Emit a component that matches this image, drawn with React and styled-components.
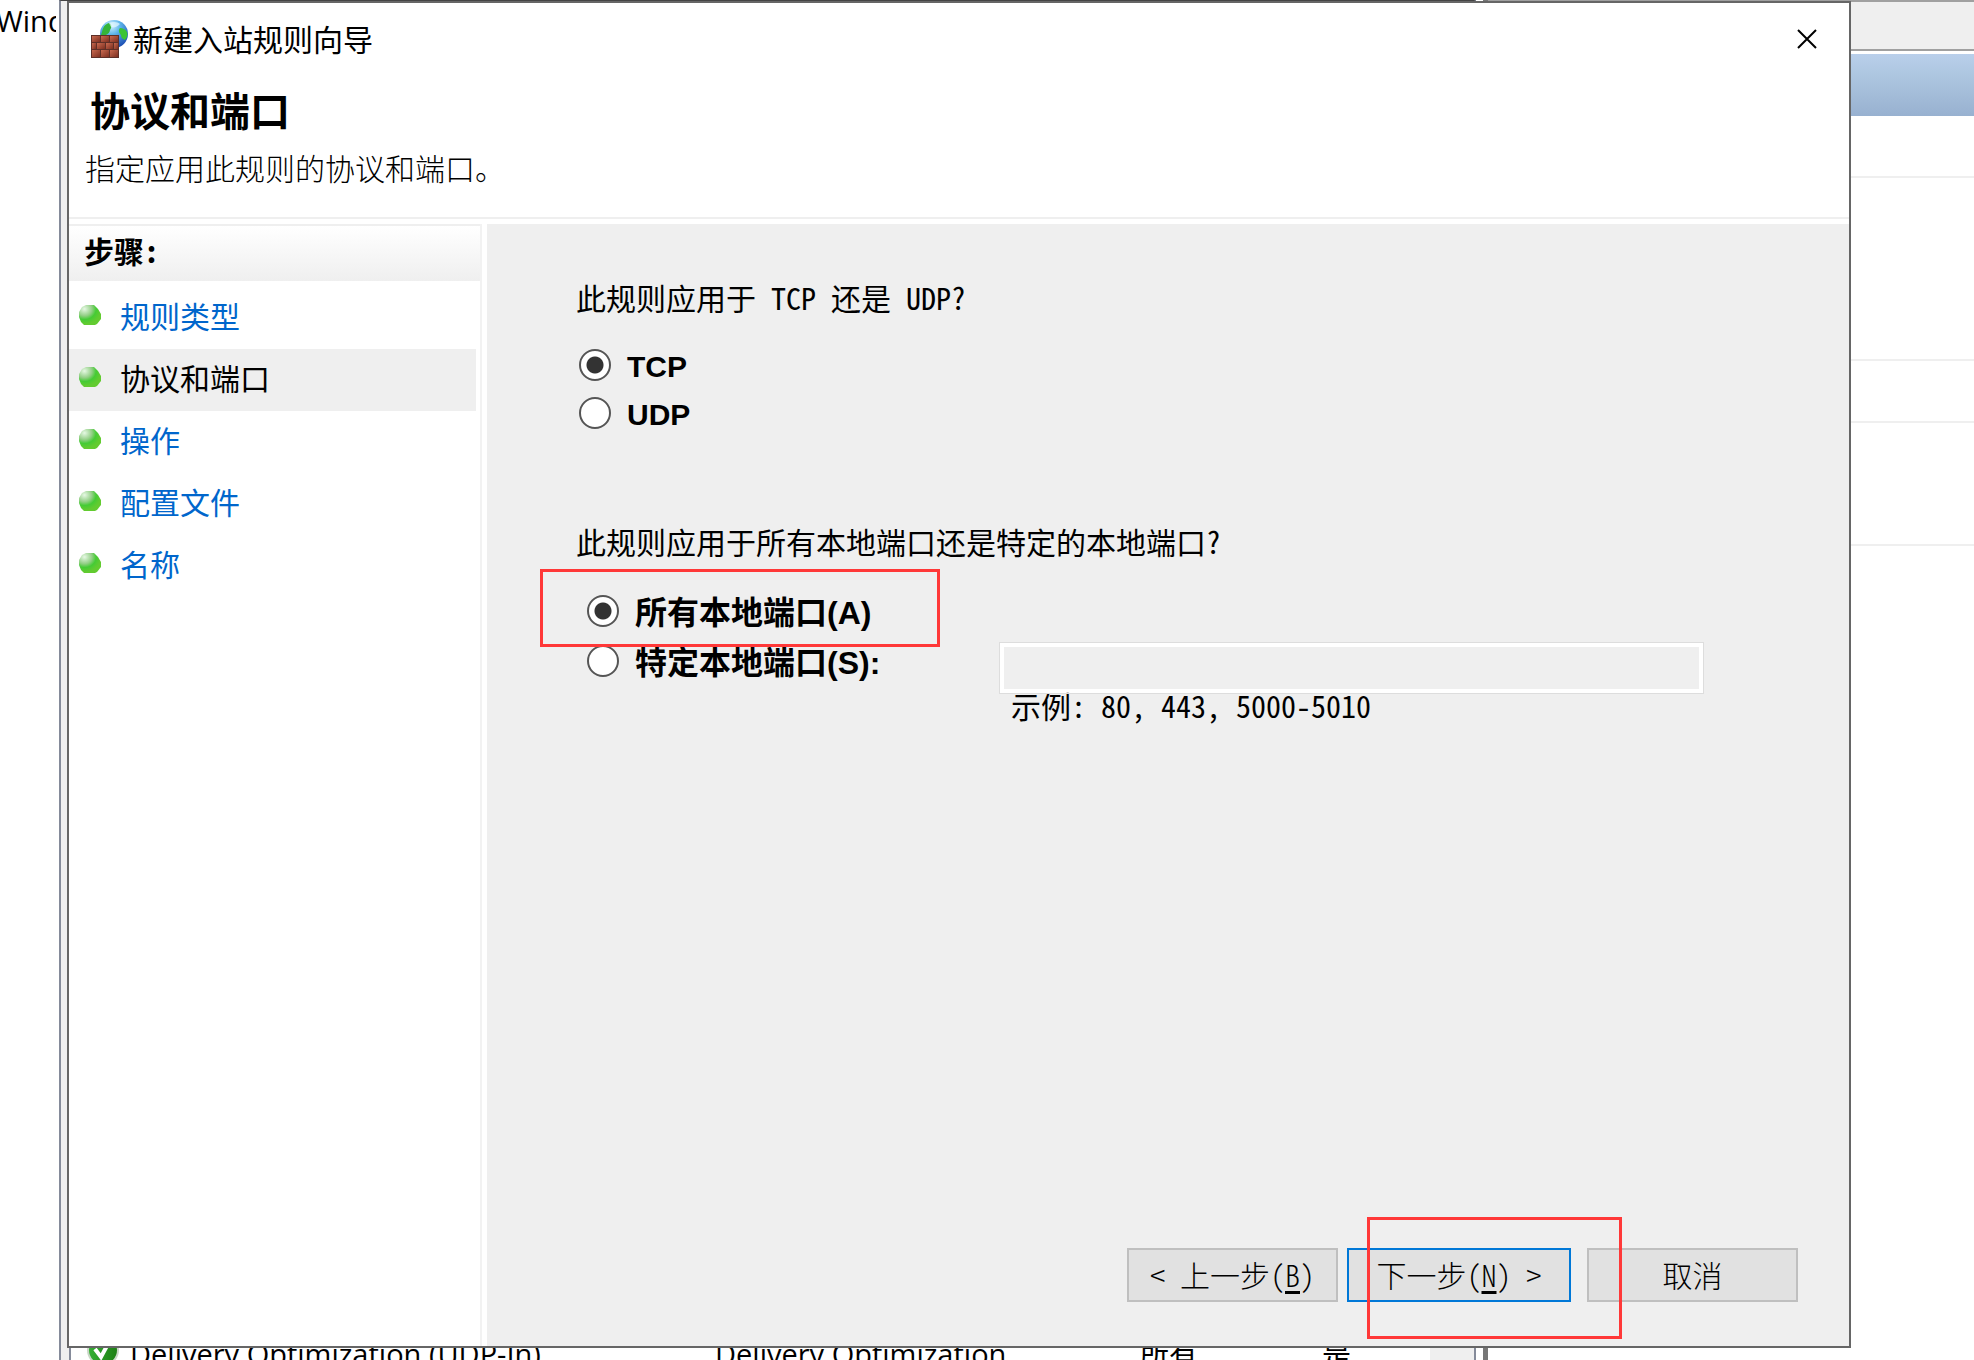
import { useState } from "react";
import styled, { createGlobalStyle } from "styled-components";

const steps = ["规则类型", "协议和端口", "操作", "配置文件", "名称"];

const App = () => {
    const [protocol, setProtocol] = useState("TCP");
    const [ports, setPorts] = useState("all");

    return (
        <>
            <GlobalStyle />
            <Desktop>
                <TreePane>Windows</TreePane>
                <ListPane>
                    <RuleRow>
                        <RuleName>
                            <CheckIcon />
                            Delivery Optimization (UDP-In)
                        </RuleName>
                        <RuleGroup>Delivery Optimization</RuleGroup>
                        <RuleProfile>所有</RuleProfile>
                        <RuleEnabled>是</RuleEnabled>
                        <ScrollTrack />
                    </RuleRow>
                </ListPane>
                <ActionPane>
                    <ActionTop />
                    <ActionHeader />
                    <ActionBlock $height={62} />
                    <ActionBlock $height={183} />
                    <ActionBlock $height={62} />
                    <ActionBlock $height={123} />
                </ActionPane>

                <Dialog role="dialog" aria-labelledby="wizard-title">
                    <TitleBar>
                        <FirewallIcon />
                        <Title id="wizard-title">新建入站规则向导</Title>
                        <CloseButton type="button" aria-label="关闭">
                            <svg width="20" height="20" viewBox="0 0 20 20" fill="none" stroke="#000" strokeWidth="2">
                                <path d="M1 1L19 19M19 1L1 19" />
                            </svg>
                        </CloseButton>
                    </TitleBar>
                    <Header>
                        <Heading>协议和端口</Heading>
                        <SubHeading>指定应用此规则的协议和端口。</SubHeading>
                    </Header>

                    <Body>
                        <Sidebar>
                            <SidebarTitle>步骤<Latin>:</Latin></SidebarTitle>
                            <StepList>
                                {steps.map((step, i) => (
                                    <Step key={step} $active={i === 1}>
                                        <Bullet />
                                        <StepLink href="#" $active={i === 1}>{step}</StepLink>
                                    </Step>
                                ))}
                            </StepList>
                        </Sidebar>

                        <Content>
                            <Question>
                                此规则应用于<Latin> TCP </Latin>还是<Latin> UDP?</Latin>
                            </Question>
                            <ProtocolGroup>
                                {["TCP", "UDP"].map((name) => (
                                    <Option key={name}>
                                        <Radio
                                            name="protocol"
                                            checked={protocol === name}
                                            onChange={() => setProtocol(name)}
                                        />
                                        <OptionText $size={30}>{name}</OptionText>
                                    </Option>
                                ))}
                            </ProtocolGroup>

                            <Question>
                                此规则应用于所有本地端口还是特定的本地端口<Latin>?</Latin>
                            </Question>
                            <PortGroup>
                                <Marked>
                                    <Option $tall>
                                        <Radio
                                            name="ports"
                                            checked={ports === "all"}
                                            onChange={() => setPorts("all")}
                                        />
                                        <OptionText $size={32}>所有本地端口(A)</OptionText>
                                    </Option>
                                    <PortMark />
                                </Marked>
                                <PortRow>
                                    <Option $tall>
                                        <Radio
                                            name="ports"
                                            checked={ports === "some"}
                                            onChange={() => setPorts("some")}
                                        />
                                        <OptionText $size={32}>特定本地端口(S):</OptionText>
                                    </Option>
                                    <PortField>
                                        <PortInput
                                            type="text"
                                            aria-label="特定本地端口"
                                            aria-describedby="port-hint"
                                            disabled={ports !== "some"}
                                        />
                                        <Hint id="port-hint">
                                            示例<Latin>: 80, 443, 5000-5010</Latin>
                                        </Hint>
                                    </PortField>
                                </PortRow>
                            </PortGroup>

                            <Footer>
                                <Button type="button">
                                    <Latin>&lt; </Latin>上一步<Latin>(<u>B</u>)</Latin>
                                </Button>
                                <NextWrap>
                                    <Button type="button" $primary>
                                        下一步<Latin>(<u>N</u>) &gt;</Latin>
                                    </Button>
                                    <NextMark />
                                </NextWrap>
                                <Button type="button">取消</Button>
                            </Footer>
                        </Content>
                    </Body>
                </Dialog>
            </Desktop>
        </>
    );
};
export default App;

const FirewallIcon = () => (
    <svg width="38" height="38" viewBox="0 0 38 38" aria-hidden="true">
        <defs>
            <radialGradient id="globe" cx="0.4" cy="0.2" r="0.8">
                <stop offset="0" stopColor="#d8f4ff" />
                <stop offset="0.4" stopColor="#5db4ea" />
                <stop offset="1" stopColor="#1c4fb4" />
            </radialGradient>
            <linearGradient id="brick" x1="0" y1="0" x2="1" y2="1">
                <stop offset="0" stopColor="#c96a50" />
                <stop offset="1" stopColor="#7d2f20" />
            </linearGradient>
        </defs>
        <circle cx="23" cy="14" r="14" fill="url(#globe)" />
        <path d="M11 12C12 7 14 4 18 3c3 1 3 4 1 7 0 2-2 4-4 5h-5z" fill="#35b53a" />
        <path d="M29 8c3 0 5 1 7 4 1 3 0 6-2 8-3-1-4-3-4-5-2-2-3-5-1-7z" fill="#3cc335" />
        <path d="M18 3c4-2 9-1 11 1-3 3-6 4-9 3z" fill="#e4f8ff" opacity="0.7" />
        <rect x="0" y="15" width="28" height="23" fill="#5e3028" />
        <g fill="url(#brick)">
            <rect x="1" y="16" width="8" height="6" />
            <rect x="10" y="16" width="8" height="6" />
            <rect x="19" y="16" width="8" height="6" />
            <rect x="1" y="23" width="4" height="6" />
            <rect x="6" y="23" width="8" height="6" />
            <rect x="15" y="23" width="7" height="6" />
            <rect x="23" y="23" width="4" height="6" />
            <rect x="1" y="30" width="8" height="7" />
            <rect x="10" y="30" width="8" height="7" />
            <rect x="19" y="30" width="8" height="7" />
        </g>
    </svg>
);

const CheckIcon = () => (
    <svg width="32" height="28" viewBox="0 4 32 28" aria-hidden="true">
        <defs>
            <linearGradient id="ok" x1="0" y1="0" x2="1" y2="0">
                <stop offset="0" stopColor="#35b035" />
                <stop offset="1" stopColor="#1c7d12" />
            </linearGradient>
        </defs>
        <circle cx="16" cy="16" r="15" fill="url(#ok)" stroke="#c9d6c6" strokeWidth="2" />
        <path d="M8 15l6 8 8-15" fill="none" stroke="#fff" strokeWidth="4" />
    </svg>
);

const Bullet = () => (
    <BulletIcon width="22" height="22" viewBox="0 0 22 22" aria-hidden="true">
        <defs>
            <radialGradient id="bullet" cx="0.25" cy="0.2" r="0.75">
                <stop offset="0" stopColor="#e6f8e4" />
                <stop offset="0.45" stopColor="#93cf86" />
                <stop offset="0.7" stopColor="#45cb35" />
                <stop offset="1" stopColor="#62cb30" />
            </radialGradient>
        </defs>
        <path d="M7 1h8l4 4 3 5v5l-4 5-2 1H5l-3-3-2-5V8l3-5z" fill="url(#bullet)" />
    </BulletIcon>
);

const BulletIcon = styled.svg`
    margin-bottom: 6px;
`;

const Radio = styled.input.attrs({ type: "radio" })`
    appearance: none;
    flex: none;
    width: 32px;
    height: 32px;
    margin: 0;
    border: 2px solid #555;
    border-radius: 50%;
    background: ${(p) => (p.checked ? "radial-gradient(circle, #333 0 8px, #fff 9px)" : "#fff")};
`;

const GlobalStyle = createGlobalStyle`
    * {
        box-sizing: border-box;
    }

    body {
        margin: 0;
        color: #000;
        font-family: "Liberation Sans", "Noto Sans CJK SC", sans-serif;
        font-size: 30px;
        line-height: 30px;
    }
`;

const Desktop = styled.div`
    position: relative;
    display: flex;
    min-height: 100vh;
    overflow: hidden;
    background: #fff;
`;

const TreePane = styled.div`
    flex: 0 0 59px;
    width: 59px;
    padding-top: 6px;
    overflow: hidden;
    border-right: 3px solid #fff;
    font-family: "Open Sans", sans-serif;
    font-size: 29px;
    text-indent: -4px;
`;

const ListPane = styled.div`
    display: flex;
    flex: 1;
    align-items: flex-end;
    min-width: 0;
    padding-left: 8px;
    border-top: 1px solid #444;
    border-left: 2px solid #858b9a;
    border-right: 2px solid #858b9a;
    background: #efefef;
`;

const RuleRow = styled.div`
    display: flex;
    flex: 1;
    height: 22px;
    overflow: hidden;
    border-left: 2px solid #858b9a;
    background: #fff;
    font-family: "Open Sans", "Noto Sans CJK SC", sans-serif;
    font-size: 29px;
    line-height: 32px;
    white-space: nowrap;
`;

const RuleName = styled.div`
    display: flex;
    flex: 0 0 644px;
    gap: 11px;
    padding-left: 16px;
`;

const RuleGroup = styled.div`
    flex: 1;
`;

const RuleProfile = styled.div`
    flex: 0 0 182px;
`;

const RuleEnabled = styled.div`
    flex: 0 0 108px;
`;

const ScrollTrack = styled.div`
    flex: 0 0 44px;
    background: #efefef;
`;

const ActionPane = styled.div`
    flex: 0 0 491px;
    margin-left: 7px;
    border-left: 5px solid #777;
`;

const ActionTop = styled.div`
    height: 54px;
    border-top: 2px solid #a0a0a0;
    border-bottom: 3px solid #fff;
    background: linear-gradient(#efefef 47px, #a0a0a0 47px);
`;

const ActionHeader = styled.div`
    height: 62px;
    background: linear-gradient(#b9cfeb, #adc6e0 35%, #98b1d0);
`;

const ActionBlock = styled.div`
    height: ${(p) => p.$height}px;
    border-bottom: 2px solid #efefef;
`;

const Dialog = styled.section`
    position: absolute;
    inset: 1px 123px 12px 67px;
    display: flex;
    flex-direction: column;
    border: 2px solid #666;
    background: #fff;
`;

const TitleBar = styled.div`
    display: flex;
    align-items: center;
    height: 72px;
    padding: 0 32px 0 22px;
`;

const Title = styled.h1`
    flex: 1;
    margin: 0;
    padding: 4px 0 0 4px;
    font-size: 30px;
    font-weight: 400;
`;

const CloseButton = styled.button`
    display: flex;
    padding: 0;
    border: 0;
    background: none;
`;

const Header = styled.header`
    padding: 15px 16px 32px;
    border-bottom: 2px solid #efefef;
`;

const Heading = styled.h2`
    margin: 0 0 21px;
    padding-left: 5px;
    font-size: 40px;
    font-weight: 700;
    line-height: 44px;
`;

const SubHeading = styled.p`
    margin: 0;
    font-weight: 300;
`;

const Body = styled.div`
    display: flex;
    flex: 1;
    padding-top: 5px;
`;

const Sidebar = styled.nav`
    flex: 0 0 413px;
    margin-right: 5px;
    border-right: 2px solid #f2f2f2;
`;

const SidebarTitle = styled.div`
    height: 57px;
    padding: 12px 15px;
    border-top: 2px solid #efefef;
    background: linear-gradient(#fff, #efefef);
    font-weight: 700;
`;

const StepList = styled.ul`
    margin: 0;
    padding: 6px 4px 0 0;
    list-style: none;
`;

const Step = styled.li`
    display: flex;
    align-items: center;
    gap: 19px;
    height: 62px;
    padding-left: 10px;
    background: ${(p) => (p.$active ? "#efefef" : "transparent")};
`;

const StepLink = styled.a`
    color: ${(p) => (p.$active ? "#000" : "#0066cc")};
    text-decoration: none;
`;

const Content = styled.main`
    display: flex;
    flex: 1;
    flex-direction: column;
    padding: 61px 51px 44px 89px;
    background: #efefef;
`;

const Question = styled.p`
    margin: 0;
`;

/* half-width characters, two of them to one full-width cell */
const Latin = styled.span`
    font-family: "Noto Sans Mono CJK SC", "Noto Sans CJK SC", monospace;
    font-feature-settings: "hwid";
    line-height: 20px;
    white-space: pre;
`;

const ProtocolGroup = styled.div`
    margin: 26px 0 92px;
    padding-left: 3px;
`;

const Option = styled.label`
    display: flex;
    align-items: center;
    gap: 16px;
    width: fit-content;
    height: ${(p) => (p.$tall ? 50 : 48)}px;
`;

const OptionText = styled.span`
    padding-top: 4px;
    font-size: ${(p) => p.$size}px;
    font-weight: 700;
`;

const PortGroup = styled.div`
    margin-top: 27px;
    padding: 0 94px 0 11px;
`;

const Marked = styled.div`
    position: relative;
    width: fit-content;
`;

const Mark = styled.div`
    position: absolute;
    z-index: 1;
    border: 3px solid #ff3838;
    pointer-events: none;
`;

const PortMark = styled(Mark)`
    top: -17px;
    left: -47px;
    width: 400px;
    height: 78px;
`;

const PortRow = styled.div`
    display: grid;
    grid-template-columns: 412px 1fr;
    align-items: start;
`;

const PortField = styled.div`
    padding-top: 6px;
`;

const PortInput = styled.input`
    display: block;
    width: 100%;
    height: 52px;
    padding: 0 8px;
    border: 5px solid #fff;
    outline: 1px solid #ddd;
    outline-offset: -1px;
    background: #efefef;
    font: inherit;
`;

const Hint = styled.div`
    padding-left: 12px;
    line-height: 28px;
`;

const Footer = styled.footer`
    display: flex;
    justify-content: flex-end;
    margin-top: auto;
`;

const Button = styled.button`
    width: ${(p) => (p.$primary ? 224 : 211)}px;
    height: 54px;
    padding: 4px 0 0;
    border: ${(p) => (p.$primary ? "2px solid #0078d7" : "2px solid #bfbfbf")};
    background: #e1e1e1;
    color: #000;
    font: inherit;
    font-weight: 300;
    white-space: nowrap;

    ${Latin} {
        font-family: "Noto Sans CJK SC", sans-serif;
    }

    u {
        text-underline-offset: 4px;
    }
`;

const NextWrap = styled.div`
    position: relative;
    margin: 0 16px 0 9px;
`;

const NextMark = styled(Mark)`
    inset: -31px -51px -37px 20px;
`;
